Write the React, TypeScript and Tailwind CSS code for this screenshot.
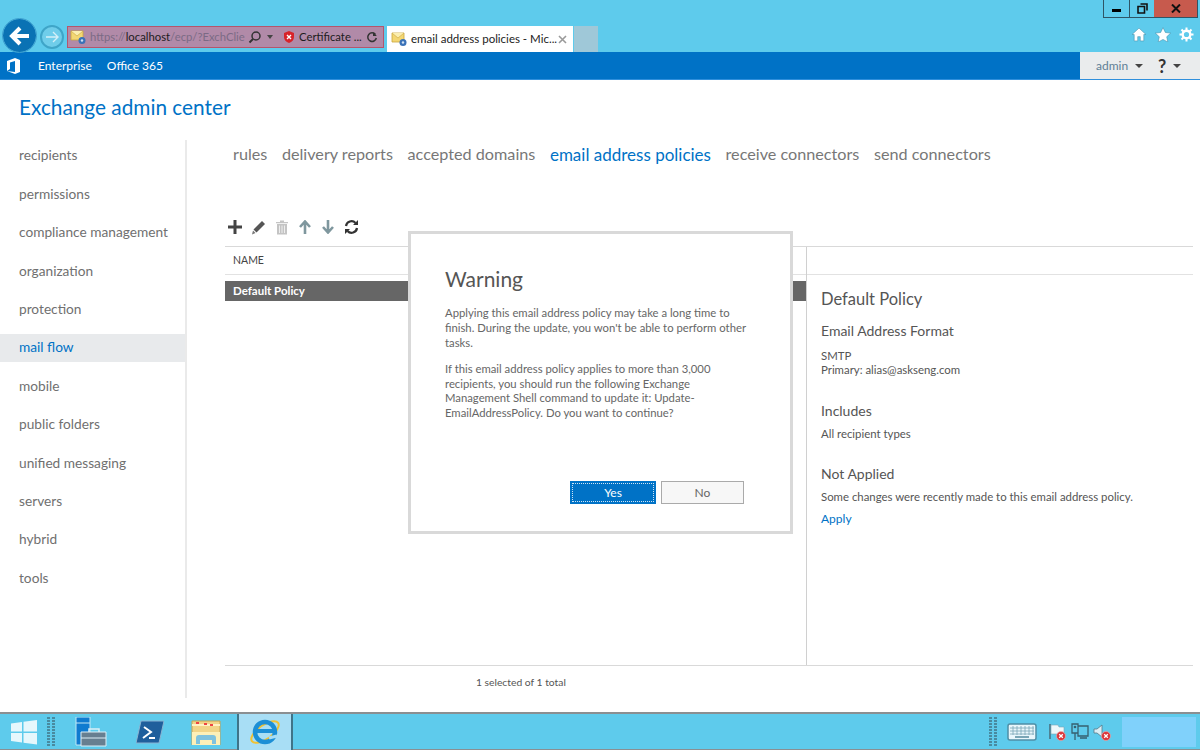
const nav = ["recipients","permissions","compliance management","organization","protection","mail flow","mobile","public folders","unified messaging","servers","hybrid","tools"];
const tabs = ["rules","delivery reports","accepted domains","email address policies","receive connectors","send connectors"];

function Mail() {
  return (
    <svg width="17" height="16" viewBox="0 0 17 16" className="shrink-0">
      <path d="M1 2h12v9H1z" fill="#f3d774" stroke="#c9a63e" strokeWidth="0.8" />
      <path d="M1 2l6 5 6-5" fill="#fbeeb0" stroke="#c9a63e" strokeWidth="0.6" />
      <circle cx="12" cy="11.5" r="3.5" fill="#3a72b8" />
      <circle cx="12" cy="11.5" r="1.2" fill="#cfe0f2" />
    </svg>
  );
}

function Badge() {
  return (
    <g>
      <circle cx="13" cy="13" r="4.5" fill="#d9373c" stroke="#f4b0b0" strokeWidth="0.6" />
      <path d="M11.2 11.2l3.6 3.6M14.8 11.2l-3.6 3.6" stroke="#fff" strokeWidth="1.3" />
    </g>
  );
}

function Grip() {
  return (
    <div className="grid h-[29px] w-[8px] grid-cols-2 gap-[1px] overflow-hidden opacity-70">
      {Array.from({ length: 30 }).map((_, i) => <div key={i} className="h-[2px] w-[3px] bg-[#3f6f80]" />)}
    </div>
  );
}

export default function App() {
  return (
    <div className="relative flex h-[750px] w-[1200px] flex-col overflow-hidden bg-white font-['Lato',sans-serif] text-[#666]">
      {/* Browser chrome */}
      <div className="relative h-[52px] shrink-0 bg-[#5ecbec]">
        <div className="flex h-[19px] justify-end pr-[2px]">
          <div className="flex h-[18px] border-b border-l border-r border-[#2e5566]">
            <div className="flex w-[26px] items-center justify-center border-r border-[#2e5566]">
              <div className="mt-[3px] h-[3px] w-[9px] bg-black" />
            </div>
            <div className="flex w-[24px] items-center justify-center">
              <svg width="11" height="11" viewBox="0 0 11 11"><path d="M3.5 1h6.5v6.500M1 3.500h6.500v6.500H1z" fill="none" stroke="#111" strokeWidth="1.600" /></svg>
            </div>
            <div className="flex w-[43px] items-center justify-center bg-[#c75a4d]">
              <svg width="10" height="9" viewBox="0 0 10 9"><path d="M1 .5l8 8M9 .5l-8 8" stroke="#111" strokeWidth="2" /></svg>
            </div>
          </div>
        </div>
        <div className="flex items-start pl-[3px]">
          <div className="z-10 flex h-[33px] w-[33px] items-center justify-center rounded-full bg-[#0a72b4] outline-1 outline-[#3d9fcf]">
            <svg width="22" height="20" viewBox="0 0 22 20"><path d="M11 2L3 10l8 8M3.500 10H20" fill="none" stroke="#fff" strokeWidth="4" /></svg>
          </div>
          <div className="ml-[4px] mt-[6px] flex h-[24px] w-[24px] items-center justify-center rounded-full border-2 border-[#3fa5c8] bg-[#6fcdea]">
            <svg width="14" height="12" viewBox="0 0 14 12"><path d="M8 1l5 5-5 5M13 6H1" fill="none" stroke="#d4eff8" strokeWidth="1.400" /></svg>
          </div>
          <div className="ml-[3px] mt-[7px] flex h-[22px] w-[317px] items-center border border-[#b4566d] bg-[#b18aa8] pl-[2px] text-[11.300px]">
            <Mail />
            <span className="ml-[3px] w-[155px] whitespace-nowrap text-[#7b6a85]">https://<span className="text-[#1c1c1c]">localhost</span>/ecp/?ExchClie</span>
            <svg className="ml-[3px]" width="14" height="14" viewBox="0 0 14 14"><circle cx="8" cy="6" r="4" fill="none" stroke="#333" strokeWidth="1.500" /><path d="M5 9l-3.500 3.500" stroke="#333" strokeWidth="2" /></svg>
            <div className="ml-[5px] h-0 w-0 border-x-[3px] border-t-[4px] border-x-transparent border-t-[#444]" />
            <svg className="ml-[10px]" width="12" height="14" viewBox="0 0 12 14"><path d="M6 1l5 2v4c0 3-2 5-5 6-3-1-5-3-5-6V3z" fill="#d8232a" /><path d="M4 5l4 4M8 5l-4 4" stroke="#fff" strokeWidth="1.400" /></svg>
            <span className="ml-[4px] w-[62px] whitespace-nowrap text-[#1c1c1c]">Certificate ...</span>
            <svg className="ml-[5px]" width="12" height="12" viewBox="0 0 12 12"><path d="M9.500 3.500A4.300 4.300 0 1 0 10.300 7" fill="none" stroke="#333" strokeWidth="1.500" /><path d="M7 1v4h3.800z" fill="#333" /></svg>
          </div>
          <div className="ml-[3px] mt-[7px] flex h-[26px] w-[186px] items-center bg-white pl-[4px] text-[11.500px] text-[#222]">
            <Mail />
            <span className="ml-[3px] w-[146px] whitespace-nowrap">email address policies - Mic...</span>
            <svg className="ml-[1px]" width="9" height="9" viewBox="0 0 9 9"><path d="M1 1l7 7M8 1L1 8" stroke="#9a9a9a" strokeWidth="1.600" /></svg>
          </div>
          <div className="ml-[1px] mt-[7px] h-[26px] w-[24px] bg-[#9fc8d8]" />
          <div className="ml-auto mr-[6px] mt-[8px] flex items-center gap-[8px]">
            <svg width="16" height="15" viewBox="0 0 15 14"><path d="M7.500 1L1 7h2v6h3.300V9h2.400v4H12V7h2z" fill="#fff" stroke="#3b8aa6" strokeWidth="0.500" /></svg>
            <svg width="16" height="15" viewBox="0 0 15 14"><path d="M7.500.5l2.200 4.600 5 .6-3.700 3.400 1 5-4.500-2.500L3 14.100l1-5L.3 5.700l5-.6z" fill="#fff" stroke="#3b8aa6" strokeWidth="0.500" /></svg>
            <svg width="15" height="15" viewBox="0 0 15 15"><circle cx="7.500" cy="7.500" r="3.800" fill="none" stroke="#fff" strokeWidth="2.400" /><path d="M7.500.5v3M7.500 11.500v3M.5 7.500h3M11.500 7.500h3M2.500 2.500l2.200 2.200M10.300 10.300l2.200 2.200M12.500 2.500l-2.200 2.200M4.700 10.300l-2.200 2.200" stroke="#fff" strokeWidth="2" /></svg>
          </div>
        </div>
      </div>

      {/* Blue bar */}
      <div className="flex h-[28px] shrink-0 border-b border-[#2f8fdc] bg-[#0072c6] text-[12px] text-white">
        <div className="flex items-center pl-[7px]">
          <svg width="13" height="16" viewBox="0 0 13 16"><path d="M0 3l8-3 5 2v12l-5 2-8-3 8 1V3L3 4.500v6.500L0 13z" fill="#fff" /></svg>
        </div>
        <span className="ml-[18px] self-center">Enterprise</span>
        <span className="ml-[15px] self-center">Office 365</span>
        <div className="ml-auto flex w-[120px] items-center bg-[#eaeced] pl-[16px] text-[#5f7f96]">
          <span className="w-[33px] text-[12px]">admin</span>
          <div className="ml-[6px] h-0 w-0 border-x-[4px] border-t-[4px] border-x-transparent border-t-[#444]" />
          <span className="ml-[15px] text-[18px] font-bold leading-none text-[#333]">?</span>
          <div className="ml-[7px] h-0 w-0 border-x-[4px] border-t-[4px] border-x-transparent border-t-[#444]" />
        </div>
      </div>

      {/* Title */}
      <div className="flex h-[54px] shrink-0 items-center pl-[19px] text-[20.800px] text-[#0072c6]">Exchange admin center</div>

      {/* Main */}
      <div className="flex min-h-0 flex-1 pb-[14px] pt-[6px]">
        <div className="w-[187px] shrink-0 border-r-2 border-[#eaeaea]">
          <div className="-mt-[3.500px]">
            {nav.map((n) => (
              <div key={n} className={`flex h-[38.4px] items-center pl-[19px] text-[13.700px] ${n === "mail flow" ? "text-[#0072c6]" : "text-[#707070]"}`}>
                <span className={n === "mail flow" ? "-ml-[19px] flex h-[28px] w-[185px] items-center bg-[#e8eaec] pl-[19px]" : ""}>{n}</span>
              </div>
            ))}
          </div>
        </div>
        <div className="flex min-w-0 flex-1 flex-col pl-[38px] pr-[7px]">
          <div className="flex h-[29px] items-center gap-[14.600px] pl-[8px] text-[16.200px]">
            {tabs.map((t) => (
              <span key={t} className={`whitespace-nowrap ${t === "email address policies" ? "text-[17px] text-[#0072c6]" : "text-[#777]"}`}>{t}</span>
            ))}
          </div>
          <div className="mb-[6px] mt-[45px] flex h-[26px] items-center gap-[9px] pl-[3px]">
            <svg width="14" height="14" viewBox="0 0 14 14"><path d="M7 0v14M0 7h14" stroke="#444" strokeWidth="3" /></svg>
            <svg width="15" height="15" viewBox="0 0 15 15"><path d="M11 1l3 3-8.500 8.500-3-3z" fill="#555" /><path d="M2 10.500l2.500 2.500L1 14.500z" fill="#777" /></svg>
            <svg width="14" height="15" viewBox="0 0 14 15"><path d="M2 4h10v10.500H2zM1 2h12v1.200H1zM5 .5h4V2H5z" fill="#c4c4c4" /><path d="M4.500 5.500v7.500M7 5.500v7.500M9.500 5.500v7.500" stroke="#eee" /></svg>
            <svg width="14" height="14" viewBox="0 0 14 14"><path d="M7 14V2M2 7l5-5.500L12 7" fill="none" stroke="#7f979e" strokeWidth="2.600" /></svg>
            <svg width="14" height="14" viewBox="0 0 14 14"><path d="M7 0v12M2 7l5 5.500L12 7" fill="none" stroke="#7f979e" strokeWidth="2.600" /></svg>
            <svg width="15" height="14" viewBox="0 0 15 14"><path d="M2 6a5.500 5.500 0 0 1 9.500-3M13 8a5.500 5.500 0 0 1-9.500 3" fill="none" stroke="#333" strokeWidth="2.200" /><path d="M9 5h5V0zM6 9H1v5z" fill="#333" /></svg>
          </div>
          <div className="flex min-h-0 flex-1 border-b border-t border-[#d9d9d9]">
            <div className="flex w-[582px] shrink-0 flex-col border-r border-[#d0d0d0]">
              <div className="flex h-[28px] items-center border-b border-[#e2e2e2] pl-[8px] text-[10.500px] text-[#444]">NAME</div>
              <div className="mt-[6px] flex h-[20px] items-center bg-[#666] pl-[8px] text-[11.500px] font-bold text-white">Default Policy</div>
            </div>
            <div className="flex-1">
              <div className="h-[28px] border-b border-[#e2e2e2]" />
              <div className="pl-[14px] pt-[13px] text-[#555]">
                <div className="text-[16.500px] leading-[22px]">Default Policy</div>
                <div className="mt-[12px] text-[14px] leading-[18px]">Email Address Format</div>
                <div className="mt-[9px] text-[11.400px] leading-[14px]">SMTP</div>
                <div className="text-[11.400px] leading-[14px]">Primary: alias@askseng.com</div>
                <div className="mt-[25px] text-[14px] leading-[18px]">Includes</div>
                <div className="mt-[7px] text-[11.400px] leading-[14px]">All recipient types</div>
                <div className="mt-[24px] text-[14px] leading-[18px]">Not Applied</div>
                <div className="mt-[7px] text-[11.400px] leading-[14px]">Some changes were recently made to this email address policy.</div>
                <div className="mt-[8px] text-[12px] leading-[14px] text-[#0072c6]">Apply</div>
              </div>
            </div>
          </div>
          <div className="flex h-[32px] shrink-0 items-center pl-[251px] pt-[1px] text-[10.300px] text-[#555]">1 selected of 1 total</div>
        </div>
      </div>

      {/* Taskbar */}
      <div className="flex h-[38px] shrink-0 items-center border-b border-t-2 border-[#8a8f92] bg-[#5ecbec] pl-[11px]">
        <svg width="26" height="26" viewBox="0 0 26 26"><path d="M0 4.500L11 3v9.500H0zM12.500 2.800L26 1v11.500H12.500zM0 14h11v9.500L0 22zM12.500 14H26v11.500l-13.500-1.800z" fill="#e6f7fc" /></svg>
        <div className="ml-[10px]"><Grip /></div>
        <svg className="ml-[20px]" width="32" height="30" viewBox="0 0 32 30"><path d="M1 0h14v28H1z" fill="#0f7bd0" stroke="#bfe7f5" /><path d="M1 6h14" stroke="#bfe7f5" /><path d="M6 15h25v14H6z" fill="#677f90" stroke="#dceff6" /><path d="M14 15v-3h10v3" fill="none" stroke="#dceff6" strokeWidth="1.500" /><path d="M6 21h25" stroke="#dceff6" /></svg>
        <svg className="ml-[29px]" width="28" height="24" viewBox="0 0 28 24"><path d="M5 1h23l-5 22H0z" fill="#1f5f9c" stroke="#8ab4d2" /><path d="M8 7l7 5-8 6M13 18h6" fill="none" stroke="#fff" strokeWidth="2" /></svg>
        <svg className="ml-[27px]" width="30" height="26" viewBox="0 0 30 26"><path d="M1 2h28v24H1z" fill="#f2d588" stroke="#c8a250" /><path d="M1 6h28" stroke="#fff2c4" strokeWidth="2" /><path d="M5 4h3M13 5h3M19 6h3" stroke="#ef4444" strokeWidth="2" /><path d="M1 13h28v13H1z" fill="#fdf0b8" /><path d="M5 25V19c0-2 1-3 3-3h14c2 0 3 1 3 3v6h-4v-4H9v4z" fill="#7fc2de" /></svg>
        <div className="ml-[16px] flex h-[36px] w-[56px] items-center justify-center border-x-2 border-[#3f7488] bg-[#a8def5]">
          <svg width="32" height="32" viewBox="0 0 32 32">
            <ellipse cx="16" cy="16" rx="16" ry="7" transform="rotate(-35 16 16)" fill="none" stroke="#f1c232" strokeWidth="2" />
            <circle cx="16" cy="16" r="10" fill="none" stroke="#1c8fd6" strokeWidth="4.500" />
            <path d="M7 15h18" stroke="#1c8fd6" strokeWidth="4" />
            <path d="M20 22l8-2" stroke="#a8def5" strokeWidth="3" />
          </svg>
        </div>
        <div className="ml-auto flex items-center">
          <Grip />
          <svg className="ml-[10px]" width="30" height="18" viewBox="0 0 30 18"><rect x="1" y="1" width="28" height="16" rx="2" fill="#e8f6fb" stroke="#4f8fa6" strokeWidth="1.500" /><path d="M3 5h24M3 8h24M3 11h24M6 3v9M10 3v9M14 3v9M18 3v9M22 3v9M26 3v9" stroke="#7aa6b6" strokeWidth="0.800" /><path d="M8 14h14" stroke="#7aa6b6" strokeWidth="2" /></svg>
          <svg className="ml-[11px]" width="18" height="18" viewBox="0 0 18 18"><path d="M2 1v15" stroke="#4a6a78" strokeWidth="1.500" /><path d="M3 2h7l1 2h5v7H3z" fill="#eef8fb" stroke="#7aa6b6" strokeWidth="0.600" /><Badge /></svg>
          <svg className="ml-[5px]" width="18" height="18" viewBox="0 0 18 18"><path d="M1 1h6v9H1zM7 3h10v10H7z" fill="none" stroke="#37606f" strokeWidth="1.300" /><path d="M4 10v7M9 15h7" stroke="#37606f" strokeWidth="1.300" /><circle cx="4" cy="4" r="1.300" fill="#37606f" /></svg>
          <svg className="ml-[4px]" width="18" height="18" viewBox="0 0 18 18"><path d="M1 6h3l5-4v12l-5-4H1z" fill="#dbeef5" stroke="#587a88" strokeWidth="0.800" /><Badge /></svg>
          <div className="ml-[11px] mr-[4px] h-[30px] w-[74px] bg-[#80d1fb]" />
        </div>
      </div>

      {/* Dialog */}
      <div className="absolute left-[408px] top-[231px] h-[303px] w-[385px] border-[3px] border-[#d9d9d9] bg-white pl-[34px] pt-[30px] text-[#666]">
        <div className="text-[21px] leading-[30px] text-[#555]">Warning</div>
        <p className="mt-[11px] w-[310px] text-[11.300px] leading-[15px]">Applying this email address policy may take a long time to finish. During the update, you won't be able to perform other tasks.</p>
        <p className="mt-[12px] w-[290px] text-[11.300px] leading-[14.700px]">If this email address policy applies to more than 3,000 recipients, you should run the following Exchange Management Shell command to update it: Update-EmailAddressPolicy. Do you want to continue?</p>
        <div className="absolute bottom-[27px] right-[46px] flex gap-[5px] text-[12px]">
          <div className="flex h-[23px] w-[86px] items-center justify-center bg-[#0072c6] text-white outline-1 -outline-offset-3 outline-dotted outline-[#cde3f4]">Yes</div>
          <div className="flex h-[23px] w-[83px] items-center justify-center border border-[#aaa] bg-[#f7f7f7] text-[#666]">No</div>
        </div>
      </div>
    </div>
  );
}
